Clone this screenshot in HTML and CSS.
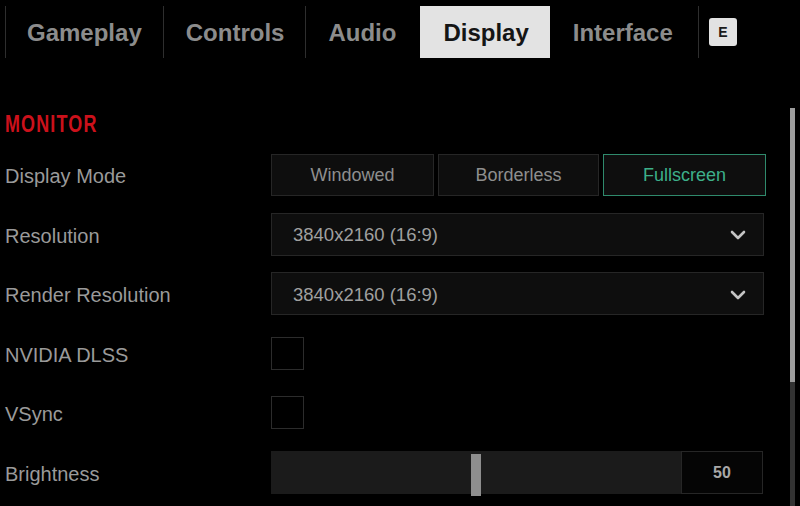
FILE: index.html
```html
<!DOCTYPE html>
<html>
<head>
<meta charset="utf-8">
<link rel="stylesheet" href="styles.css">
</head>
<body>
<div class="tabs">
  <div class="tab sep first">Gameplay</div>
  <div class="tab sep">Controls</div>
  <div class="tab sep audio">Audio</div>
  <div class="tab active">Display</div>
  <div class="tab last">Interface</div>
  <div class="tab-end"><span class="key">E</span></div>
</div>
<div class="main">
  <div class="content">
    <div class="section"><span class="section-text">MONITOR</span></div>
    <div class="rows">
      <div class="row">
        <div class="label">Display Mode</div>
        <div class="segments">
          <div class="seg">Windowed</div>
          <div class="seg">Borderless</div>
          <div class="seg on">Fullscreen</div>
        </div>
      </div>
      <div class="row">
        <div class="label">Resolution</div>
        <div class="select"><span>3840x2160 (16:9)</span>
          <svg class="chev" width="16" height="10" viewBox="0 0 16 10"><path d="M2 2 L8 8 L14 2" fill="none" stroke="#c4c4c4" stroke-width="2.6" stroke-linecap="round" stroke-linejoin="round"/></svg>
        </div>
      </div>
      <div class="row">
        <div class="label">Render Resolution</div>
        <div class="select"><span>3840x2160 (16:9)</span>
          <svg class="chev" width="16" height="10" viewBox="0 0 16 10"><path d="M2 2 L8 8 L14 2" fill="none" stroke="#c4c4c4" stroke-width="2.6" stroke-linecap="round" stroke-linejoin="round"/></svg>
        </div>
      </div>
      <div class="row">
        <div class="label">NVIDIA DLSS</div>
        <div class="ctl"><div class="check"></div></div>
      </div>
      <div class="row">
        <div class="label">VSync</div>
        <div class="ctl"><div class="check"></div></div>
      </div>
      <div class="row">
        <div class="label">Brightness</div>
        <div class="slider">
          <div class="track"><div class="fill"></div><div class="thumb"></div><div class="rest"></div></div>
          <div class="value">50</div>
        </div>
      </div>
    </div>
  </div>
  <div class="scroll"><div class="thumbbar"></div><div class="trackbar"></div></div>
</div>
</body>
</html>
```
FILE: styles.css
```css
html, body {
  margin: 0;
  padding: 0;
  background: #000;
  width: 800px;
  height: 506px;
  overflow: hidden;
  font-family: "Liberation Sans", Arial, sans-serif;
}
.tabs {
  display: flex;
  align-items: stretch;
  height: 52px;
  padding: 6px 0 0 5px;
}
.tab {
  padding: 2px 21px 0 22px;
  font-size: 24px;
  font-weight: bold;
  color: #8c8c8c;
  display: flex;
  align-items: center;
  border-left: 1px solid transparent;
}
.tab.first { padding-left: 21px; }
.tab.audio { padding-right: 24px; }
.tab.last { padding-right: 25px; }
.tab.sep { border-left-color: #2e2e2e; }
.tab.active {
  background: #e3e3e3;
  color: #151515;
}
.tab-end {
  border-left: 1px solid #2e2e2e;
  padding-left: 10px;
  display: flex;
  align-items: center;
}
.key {
  width: 28px;
  height: 28px;
  border-radius: 3px;
  background: #e2e2e2;
  color: #1a1a1a;
  font-size: 14px;
  font-weight: bold;
  display: flex;
  align-items: center;
  justify-content: center;
}
.main {
  display: flex;
}
.content {
  flex: 1;
  padding-left: 5px;
}
.section {
  margin-top: 53px;
  font-family: "Liberation Sans", Arial, sans-serif;
  font-weight: bold;
  font-size: 23px;
  line-height: 26px;
  color: #cc111b;
}
.section-text {
  display: inline-block;
  letter-spacing: 1.5px;
  transform: scaleX(0.78);
  transform-origin: left center;
}
.rows {
  margin-top: 8px;
  display: flex;
  flex-direction: column;
}
.row {
  display: grid;
  grid-template-columns: 266px 495px;
  height: 59.5px;
  align-items: center;
}
.label {
  font-size: 20px;
  color: #9a9a9a;
  padding-top: 4px;
}
.segments {
  display: grid;
  grid-template-columns: 163px 161px 163px;
  gap: 4px;
}
.seg {
  border: 1px solid #262626;
  background: #0e0e0e;
  color: #8e8e8e;
  font-size: 18px;
  padding-top: 2px;
  box-sizing: content-box;
  height: 38px;
  display: flex;
  align-items: center;
  justify-content: center;
}
.seg.on {
  border-color: #2f8a6c;
  color: #3db08a;
}
.select {
  border: 1px solid #262626;
  background: #0e0e0e;
  color: #a0a0a0;
  font-size: 18.5px;
  display: flex;
  align-items: center;
  justify-content: space-between;
  padding: 2px 17px 0 21px;
  box-sizing: border-box;
  width: 493px;
  height: 43px;
}
.chev { display: block; }
.ctl { display: flex; }
.check {
  width: 33px;
  height: 33px;
  box-sizing: border-box;
  border: 1px solid #2c2c2c;
  background: #000;
}
.slider {
  display: flex;
  width: 492px;
  height: 43px;
}
.track {
  width: 410px;
  background: #1b1b1b;
  display: flex;
  align-items: flex-start;
}
.fill { width: 200px; }
.thumb {
  width: 10px;
  height: 42px;
  margin-top: 3px;
  background: #8e8e8e;
}
.value {
  flex: 1;
  border: 1px solid #262626;
  background: #050505;
  color: #a8a8a8;
  font-weight: bold;
  font-size: 16px;
  padding-top: 2px;
  display: flex;
  align-items: center;
  justify-content: center;
}
.scroll {
  width: 5px;
  margin: 50px 5px 0 0;
  display: flex;
  flex-direction: column;
  height: 398px;
}
.thumbbar { height: 274px; background: #9c9c9c; }
.trackbar { flex: 1; background: #333; }
```
